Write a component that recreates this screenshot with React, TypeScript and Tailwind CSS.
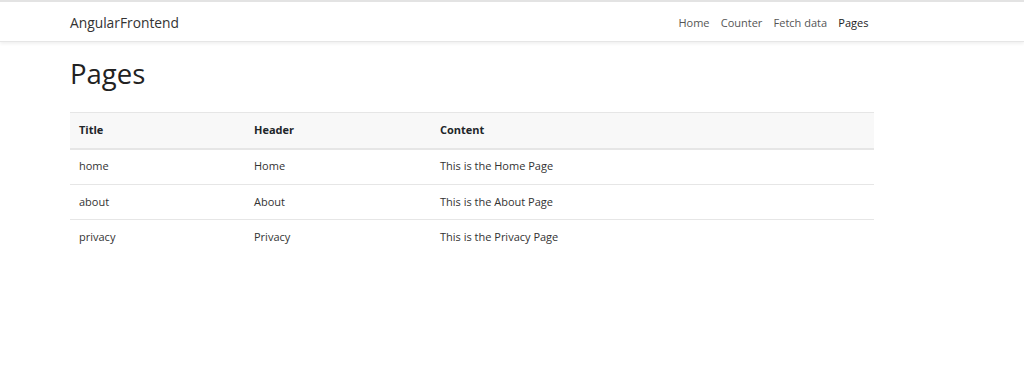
const ROWS = [
  { title: "home", header: "Home", content: "This is the Home Page" },
  { title: "about", header: "About", content: "This is the About Page" },
  { title: "privacy", header: "Privacy", content: "This is the Privacy Page" },
];

const LINKS = ["Home", "Counter", "Fetch data", "Pages"];

export default function App() {
  return (
    <div className="min-h-[379px] bg-white font-['Open_Sans','Noto_Sans',sans-serif] text-[#212529]">
      <div className="h-[2px] bg-[#e3e3e3]" />
      <header className="h-[40px] border-b border-[#e6e6e6] bg-white shadow-[0_2px_3px_rgba(0,0,0,0.06)]">
        <div className="ml-[70px] flex h-full w-[804px] items-center justify-between pt-[3px]">
          <span className="text-[13.8px] text-[#333]">AngularFrontend</span>
          <nav className="flex items-center">
            {LINKS.map((label) => (
              <a
                key={label}
                className={`px-[5.6px] text-[11px] ${label === "Pages" ? "text-[#222]" : "text-[#555]"}`}
              >
                {label}
              </a>
            ))}
          </nav>
        </div>
      </header>
      <main className="ml-[70px] w-[804px]">
        <h1 className="mt-[14px] text-[27.5px] leading-[36px] text-[#222]">Pages</h1>
        <table className="mt-[20px] w-full border-collapse text-left text-[11px]">
          <thead>
            <tr className="h-[36px] border-t border-b-2 border-[#e6e6e6] bg-[#f8f8f8]">
              <th className="w-[175px] pl-[9px] font-bold">Title</th>
              <th className="w-[186px] pl-[9px] font-bold">Header</th>
              <th className="pl-[9px] font-bold">Content</th>
            </tr>
          </thead>
          <tbody>
            {ROWS.map((row, i) => (
              <tr key={row.title} className={`h-[35.5px] ${i < ROWS.length - 1 ? "border-b border-[#e6e6e6]" : ""}`}>
                <td className="pl-[9px] text-[#333]">{row.title}</td>
                <td className="pl-[9px] text-[#333]">{row.header}</td>
                <td className="pl-[9px] text-[#333]">{row.content}</td>
              </tr>
            ))}
          </tbody>
        </table>
      </main>
    </div>
  );
}
